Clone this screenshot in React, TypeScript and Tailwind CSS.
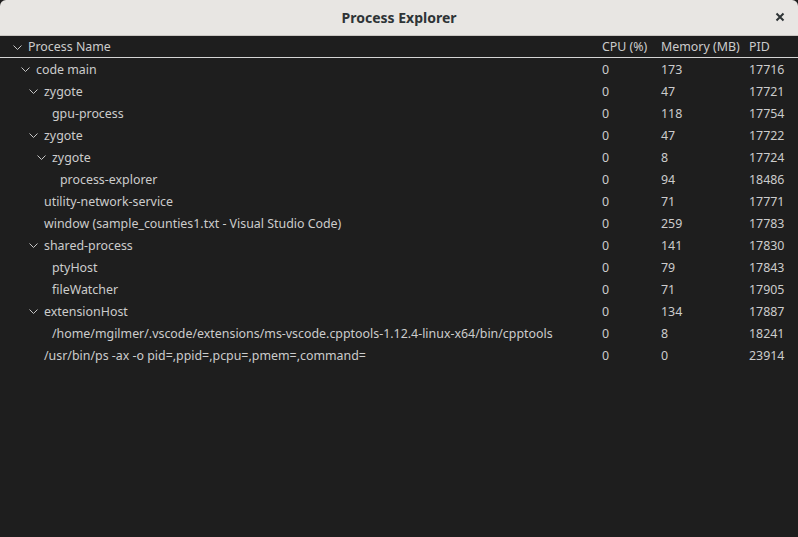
import React from 'react'

type Row = { name: string; level: number; expandable?: boolean; cpu: string; mem: string; pid: string }

const rows: Row[] = [
  { name: 'code main', level: 0, expandable: true, cpu: '0', mem: '173', pid: '17716' },
  { name: 'zygote', level: 1, expandable: true, cpu: '0', mem: '47', pid: '17721' },
  { name: 'gpu-process', level: 2, cpu: '0', mem: '118', pid: '17754' },
  { name: 'zygote', level: 1, expandable: true, cpu: '0', mem: '47', pid: '17722' },
  { name: 'zygote', level: 2, expandable: true, cpu: '0', mem: '8', pid: '17724' },
  { name: 'process-explorer', level: 3, cpu: '0', mem: '94', pid: '18486' },
  { name: 'utility-network-service', level: 1, cpu: '0', mem: '71', pid: '17771' },
  { name: 'window (sample_counties1.txt - Visual Studio Code)', level: 1, cpu: '0', mem: '259', pid: '17783' },
  { name: 'shared-process', level: 1, expandable: true, cpu: '0', mem: '141', pid: '17830' },
  { name: 'ptyHost', level: 2, cpu: '0', mem: '79', pid: '17843' },
  { name: 'fileWatcher', level: 2, cpu: '0', mem: '71', pid: '17905' },
  { name: 'extensionHost', level: 1, expandable: true, cpu: '0', mem: '134', pid: '17887' },
  { name: '/home/mgilmer/.vscode/extensions/ms-vscode.cpptools-1.12.4-linux-x64/bin/cpptools', level: 2, cpu: '0', mem: '8', pid: '18241' },
  { name: '/usr/bin/ps -ax -o pid=,ppid=,pcpu=,pmem=,command=', level: 1, cpu: '0', mem: '0', pid: '23914' },
]

// padding-left per level, written out so Tailwind picks them up
const leafPad = ['pl-[36px]', 'pl-[44px]', 'pl-[52px]', 'pl-[60px]']
const chevPad = ['pl-[20px]', 'pl-[28px]', 'pl-[36px]', 'pl-[44px]']

function Chevron() {
  return (
    <svg width="16" height="22" viewBox="0 0 16 22" className="shrink-0">
      <path d="M1.5 8.5 L5.5 12.5 L9.5 8.5" fill="none" stroke="#c5c5c5" strokeWidth="1" />
    </svg>
  )
}

export default function App() {
  return (
    <div className="w-[798px] h-[537px] flex flex-col bg-[#1e1e1e] overflow-hidden" style={{ fontFamily: '"Noto Sans", "Open Sans", sans-serif' }}>
      {/* Title bar */}
      <div className="relative h-[36px] shrink-0 flex items-center justify-center bg-[#e8e6e3] border-b border-[#c9c6c2] rounded-t-[6px]">
        <span className="text-[14px] font-bold text-[#2e3436]">Process Explorer</span>
        <svg width="10" height="10" viewBox="0 0 10 10" className="absolute right-[13px] top-[12px]">
          <path d="M1.5 1.5 L8.5 8.5 M8.5 1.5 L1.5 8.5" stroke="#2e3436" strokeWidth="2" />
        </svg>
      </div>

      {/* Column header */}
      <div className="h-[22px] shrink-0 flex items-center pt-[2px] text-[12.4px] text-[#cccccc] border-b border-[#d4d4d4]">
        <div className="flex-1 flex items-center pl-[12px]">
          <Chevron />
          <span>Process Name</span>
        </div>
        <div className="w-[59px]">CPU (%)</div>
        <div className="w-[88px]">Memory (MB)</div>
        <div className="w-[49px]">PID</div>
      </div>

      {/* Rows */}
      <div className="flex-1 pt-[1px] text-[12.4px] text-[#cccccc]">
        {rows.map((r, i) => (
          <div key={i} className="h-[22px] flex items-center">
            <div className={`flex-1 min-w-0 flex items-center whitespace-nowrap ${r.expandable ? chevPad[r.level] : leafPad[r.level]}`}>
              {r.expandable && <Chevron />}
              <span>{r.name}</span>
            </div>
            <div className="w-[59px]">{r.cpu}</div>
            <div className="w-[88px]">{r.mem}</div>
            <div className="w-[49px]">{r.pid}</div>
          </div>
        ))}
      </div>
    </div>
  )
}
